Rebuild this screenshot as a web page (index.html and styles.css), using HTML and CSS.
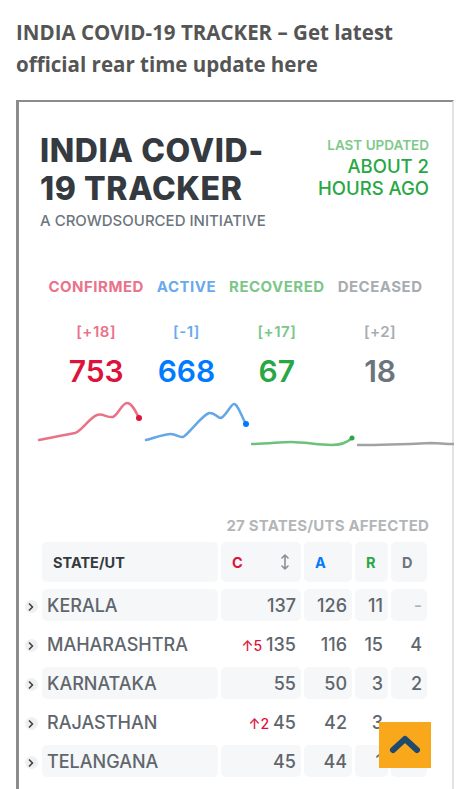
FILE: index.html
```html
<!DOCTYPE html>
<html lang="en">
<head>
   <meta charset="UTF-8">
   <meta name="viewport" content="width=device-width, initial-scale=1.0">
   <title>India Covid-19 Tracker</title>
   <link rel="stylesheet" href="styles.css">
</head>
<body>
    <h1 class="post-title">INDIA COVID-19 TRACKER – Get latest official rear time update here</h1>

    <div class="tracker">
        <!-- Header -->
        <div class="tracker-header">
            <div class="brand">
                <h2>INDIA COVID-19 TRACKER</h2>
                <p>A CROWDSOURCED INITIATIVE</p>
            </div>
            <div class="updated">
                <span class="updated-label">LAST UPDATED</span>
                <span class="updated-time">ABOUT 2<br>HOURS AGO</span>
            </div>
        </div>

        <!-- Counts -->
        <div class="level">
            <div class="level-item is-confirmed">
                <h5>CONFIRMED</h5>
                <h4>[+18]</h4>
                <h1>753</h1>
            </div>
            <div class="level-item is-active">
                <h5>ACTIVE</h5>
                <h4>[-1]</h4>
                <h1>668</h1>
            </div>
            <div class="level-item is-recovered">
                <h5>RECOVERED</h5>
                <h4>[+17]</h4>
                <h1>67</h1>
            </div>
            <div class="level-item is-deceased">
                <h5>DECEASED</h5>
                <h4>[+2]</h4>
                <h1>18</h1>
            </div>
        </div>

        <svg class="sparklines" width="435" height="55" viewBox="0 0 435 55">
            <path class="line-confirmed" d="M20 42 C30 40 45 37 56 35 C63 33 70 20 78 17 C84 15 88 20 94 19 C99 17 103 5 108 5 C113 5 117 14 120 20"/>
            <circle class="dot-confirmed" cx="120" cy="20" r="3"/>
            <path class="line-active" d="M127 42 C135 40 145 36 152 36 C157 36 160 40 164 39 C170 36 182 18 190 15 C196 14 198 20 202 20 C207 18 212 6 215 6 C219 6 223 20 227 26"/>
            <circle class="dot-active" cx="227" cy="26" r="3"/>
            <path class="line-recovered" d="M233 46 C250 46 260 44 272 44 C285 44 300 47 312 47 C322 47 328 45 333 40"/>
            <circle class="dot-recovered" cx="333" cy="40" r="2.5"/>
            <path class="line-deceased" d="M339 47 C360 47 390 46 412 45 C420 45 425 46 435 46"/>
        </svg>

        <!-- States table -->
        <div class="states">
            <div class="states-count">27 STATES/UTS AFFECTED</div>
            <table class="table">
                <colgroup>
                    <col class="col-arrow">
                    <col class="col-state">
                    <col class="col-c">
                    <col class="col-a">
                    <col class="col-r">
                    <col class="col-d">
                </colgroup>
                <thead>
                    <tr>
                        <th class="blank"></th>
                        <th>STATE/UT</th>
                        <th>
                            <div class="sort-head">
                                <span class="is-confirmed">C</span>
                                <svg width="8" height="16" viewBox="0 0 8 16">
                                    <path d="M4 1 V15 M1 4 L4 1 L7 4 M1 12 L4 15 L7 12" fill="none" stroke="#8a8f94" stroke-width="1.6" stroke-linecap="round" stroke-linejoin="round"/>
                                </svg>
                            </div>
                        </th>
                        <th class="is-active">A</th>
                        <th class="is-recovered">R</th>
                        <th class="is-deceased">D</th>
                    </tr>
                </thead>
                <tbody>
                    <tr>
                        <td class="blank"><span class="dropdown"><svg width="6" height="8" viewBox="0 0 6 8"><polyline points="1.5,1 4.5,4 1.5,7"/></svg></span></td>
                        <td>KERALA</td>
                        <td>137</td>
                        <td>126</td>
                        <td>11</td>
                        <td class="dash">-</td>
                    </tr>
                    <tr>
                        <td class="blank"><span class="dropdown"><svg width="6" height="8" viewBox="0 0 6 8"><polyline points="1.5,1 4.5,4 1.5,7"/></svg></span></td>
                        <td>MAHARASHTRA</td>
                        <td><span class="delta">↑5</span>135</td>
                        <td>116</td>
                        <td>15</td>
                        <td>4</td>
                    </tr>
                    <tr>
                        <td class="blank"><span class="dropdown"><svg width="6" height="8" viewBox="0 0 6 8"><polyline points="1.5,1 4.5,4 1.5,7"/></svg></span></td>
                        <td>KARNATAKA</td>
                        <td>55</td>
                        <td>50</td>
                        <td>3</td>
                        <td>2</td>
                    </tr>
                    <tr>
                        <td class="blank"><span class="dropdown"><svg width="6" height="8" viewBox="0 0 6 8"><polyline points="1.5,1 4.5,4 1.5,7"/></svg></span></td>
                        <td>RAJASTHAN</td>
                        <td><span class="delta">↑2</span>45</td>
                        <td>42</td>
                        <td>3</td>
                        <td class="dash">-</td>
                    </tr>
                    <tr>
                        <td class="blank"><span class="dropdown"><svg width="6" height="8" viewBox="0 0 6 8"><polyline points="1.5,1 4.5,4 1.5,7"/></svg></span></td>
                        <td>TELANGANA</td>
                        <td>45</td>
                        <td>44</td>
                        <td>1</td>
                        <td class="dash">-</td>
                    </tr>
                </tbody>
            </table>
        </div>
    </div>

    <!-- Back to top -->
    <a class="scroll-top" href="#">
        <svg width="52" height="46" viewBox="0 0 52 46">
            <polyline points="14,28 26,17 38,28" fill="none" stroke="#1f4a6d" stroke-width="6" stroke-linecap="round" stroke-linejoin="round"/>
        </svg>
    </a>
</body>
</html>
```

FILE: styles.css
```css
body {
    margin: 0;
    background-color: #fff;
    font-family: Inter, "Noto Sans", sans-serif;
    overflow: hidden;
    height: 789px;
}
.post-title {
    font-family: "Open Sans", sans-serif;
    font-size: 20.5px;
    font-weight: 700;
    line-height: 32px;
    color: #555;
    margin: 0 0 20px;
    padding: 16px 50px 0 16px;
}
.tracker {
    margin: 0 20px 0 16px;
    border-top: 2px solid #8c8c8c;
    border-left: 3px solid #8c8c8c;
    border-right: 2px solid #e4e4e4;
    padding-bottom: 40px;
}
.tracker-header {
    display: flex;
    justify-content: space-between;
    padding: 30px 23px 0 21px;
}
.brand h2 {
    width: 250px;
    margin: 0;
    font-size: 32px;
    line-height: 38px;
    font-weight: 800;
    letter-spacing: 0.6px;
    color: #343a40;
}
.brand p {
    margin: 4px 0 0;
    font-size: 15px;
    line-height: 18px;
    font-weight: 500;
    color: #6c757d;
}
.updated {
    display: flex;
    flex-direction: column;
    align-items: flex-end;
    text-align: right;
    margin-top: 5px;
}
.updated-label {
    font-size: 13.5px;
    line-height: 16px;
    font-weight: 600;
    color: #7ec98a;
}
.updated-time {
    margin-top: 2px;
    font-size: 18.5px;
    line-height: 22px;
    font-weight: 500;
    color: #28a745;
}
.level {
    display: flex;
    justify-content: center;
    gap: 13px;
    margin-top: 48px;
}
.level-item {
    display: flex;
    flex-direction: column;
    align-items: center;
}
.level-item h5 {
    margin: 0;
    font-size: 15px;
    line-height: 18px;
    font-weight: 700;
    letter-spacing: 0.5px;
}
.level-item h4 {
    margin: 27px 0 0;
    font-size: 15px;
    line-height: 18px;
    font-weight: 600;
    letter-spacing: 0.5px;
}
.level-item h1 {
    margin: 12px 0 0;
    font-size: 30px;
    line-height: 36px;
    font-weight: 600;
}
.level-item.is-confirmed h5, .level-item.is-confirmed h4 { color: #ea728a; }
.level-item.is-active h5, .level-item.is-active h4 { color: #6aaaea; }
.level-item.is-recovered h5, .level-item.is-recovered h4 { color: #7dc68a; }
.level-item.is-deceased h5, .level-item.is-deceased h4 { color: #a7acb1; }
.level-item.is-confirmed h1 { color: #dc143c; }
.level-item.is-active h1 { color: #007bff; }
.level-item.is-recovered h1 { color: #28a745; }
.level-item.is-deceased h1 { color: #6c757d; }

.sparklines {
    display: block;
    margin-top: 9px;
}
.sparklines path {
    fill: none;
    stroke-width: 2.5;
    stroke-linecap: round;
}
.line-confirmed { stroke: #ea7287; }
.line-active { stroke: #64a6e6; }
.line-recovered { stroke: #6cc27a; }
.line-deceased { stroke: #a2a2a2; }
.dot-confirmed { fill: #dc143c; }
.dot-active { fill: #007bff; }
.dot-recovered { fill: #28a745; }

.states {
    margin-top: 64px;
    padding-right: 23px;
}
.states-count {
    text-align: right;
    font-size: 15px;
    line-height: 18px;
    font-weight: 700;
    letter-spacing: 0.2px;
    color: #b3b6b9;
}
.table {
    table-layout: fixed;
    border-collapse: separate;
    border-spacing: 3px 7px;
    margin-left: 1px;
    width: 410px;
}
.col-arrow { width: 16px; }
.col-state { width: 176px; }
.col-c { width: 80px; }
.col-a { width: 48px; }
.col-r { width: 33px; }
.col-d { width: 36px; }
.table th, .table td {
    background-color: #f6f7f8;
    border-radius: 5px;
    padding: 0;
}
.table th {
    height: 40px;
    padding-left: 11px;
    text-align: left;
    font-size: 14.5px;
    font-weight: 700;
    color: #343a40;
}
.table td {
    height: 32px;
    padding: 0 5px;
    text-align: right;
    font-size: 18px;
    font-weight: 500;
    color: #5f666d;
}
.table td:nth-child(2) {
    text-align: left;
}
.table tbody tr:nth-child(even) td {
    background-color: transparent;
}
.table .blank, .table tbody tr td.blank {
    background-color: transparent;
    padding: 0;
    text-align: center;
}
.sort-head {
    display: flex;
    justify-content: space-between;
    align-items: center;
    padding-right: 12px;
}
.table .is-confirmed { color: #dc143c; }
.table .is-active { color: #007bff; }
.table .is-recovered { color: #28a745; }
.table .is-deceased { color: #6c757d; }
.dropdown {
    display: inline-flex;
    align-items: center;
    justify-content: center;
    width: 13px;
    height: 13px;
    border-radius: 50%;
    background-color: #eef0f1;
    vertical-align: middle;
}
.dropdown polyline {
    fill: none;
    stroke: #444;
    stroke-width: 1.7;
    stroke-linecap: round;
    stroke-linejoin: round;
}
.delta {
    font-size: 14px;
    color: #dc143c;
    margin-right: 4px;
}
.table td.dash {
    color: #b0b4b8;
}
.scroll-top {
    position: fixed;
    right: 43px;
    bottom: 21px;
    width: 52px;
    height: 46px;
    background-color: #f9a81b;
}
.scroll-top svg {
    display: block;
}
```
